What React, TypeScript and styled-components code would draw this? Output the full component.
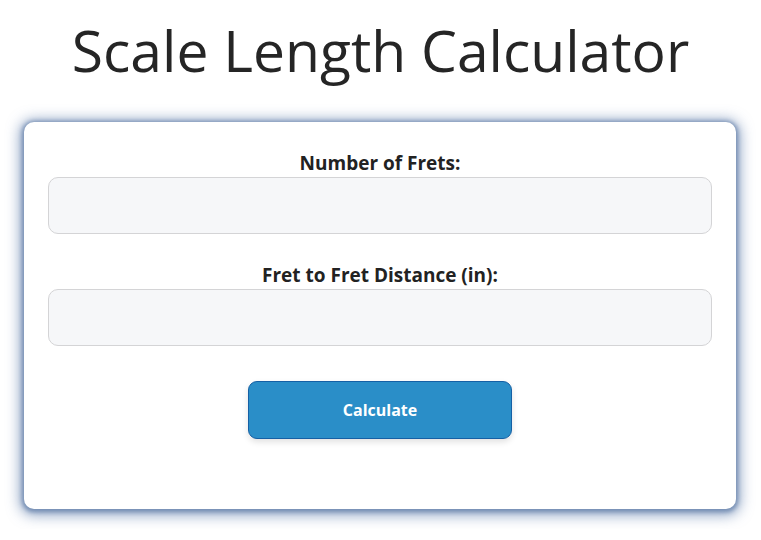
import React from "react";
import styled, { createGlobalStyle } from "styled-components";

const Global = createGlobalStyle`
  html, body { margin: 0; padding: 0; background: #fff; }
  body { font-family: "Segoe UI", "Open Sans", "Noto Sans", sans-serif; color: #222; }
`;

const Page = styled.div`
  width: 761px;
  padding: 12px 24px 20px 24px;
  box-sizing: border-box;
`;

const Title = styled.h1`
  margin: 0 0 34px 0;
  text-align: center;
  font-weight: 400;
  font-size: 57px;
  line-height: 76px;
  color: #252525;
`;

const Card = styled.div`
  width: 712px;
  background: #fff;
  border-radius: 10px;
  box-shadow: 0 1px 4px 2px rgba(100, 128, 170, 0.75), 0 2px 14px 4px rgba(70, 105, 160, 0.6);
  padding: 28px 24px 70px 24px;
  box-sizing: border-box;
  display: flex;
  flex-direction: column;
  align-items: stretch;
`;

const Field = styled.div`
  display: flex;
  flex-direction: column;
  gap: 1px;
  & + & {
    margin-top: 28px;
  }
`;

const Label = styled.label`
  text-align: center;
  font-weight: 700;
  font-size: 19px;
  line-height: 26px;
  color: #222;
`;

const Input = styled.input`
  display: block;
  height: 57px;
  box-sizing: border-box;
  border: 1px solid #d4d4d6;
  border-radius: 10px;
  background: #f6f7f9;
  font-size: 16px;
  padding: 0 12px;
  margin: 0;
`;

const Button = styled.button`
  align-self: center;
  margin-top: 35px;
  width: 264px;
  height: 58px;
  background: #2a8ec8;
  border: 1.5px solid #1560a5;
  border-radius: 9px;
  color: #fff;
  font-family: inherit;
  font-weight: 700;
  font-size: 16px;
  box-shadow: 0 3px 6px rgba(0, 0, 0, 0.12);
`;

export default function App() {
  return (
    <Page>
      <Global />
      <Title>Scale Length Calculator</Title>
      <Card>
        <Field>
          <Label>Number of Frets:</Label>
          <Input />
        </Field>
        <Field>
          <Label>Fret to Fret Distance (in):</Label>
          <Input />
        </Field>
        <Button>Calculate</Button>
      </Card>
    </Page>
  );
}
